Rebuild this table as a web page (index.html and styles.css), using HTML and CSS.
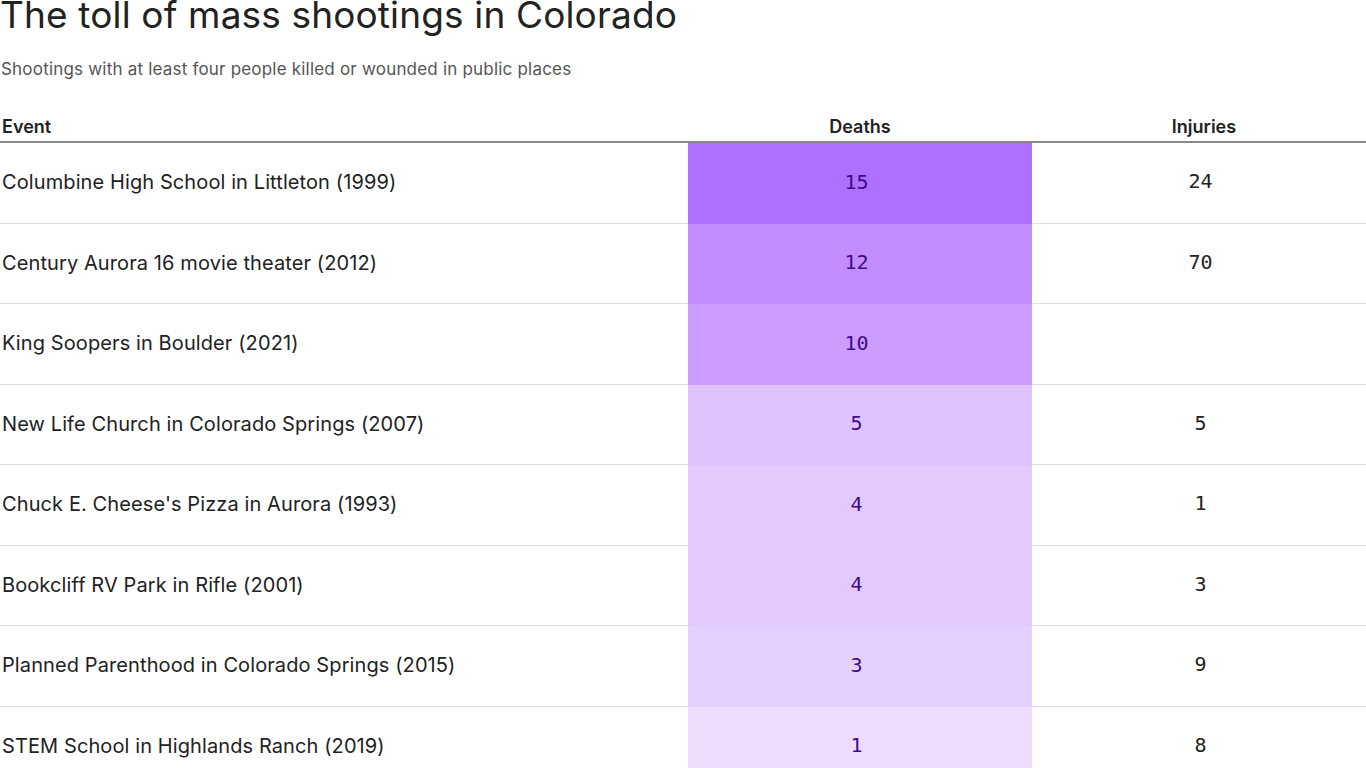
FILE: index.html
```html
<!DOCTYPE html>
<html lang="en">
<head>
<meta charset="utf-8">
<title>The toll of mass shootings in Colorado</title>
<link rel="stylesheet" href="styles.css">
</head>
<body>
<main class="page">
  <h1 class="title">The toll of mass shootings in Colorado</h1>
  <p class="subtitle">Shootings with at least four people killed or wounded in public places</p>
  <div class="table">
    <div class="row head">
      <div class="cell event">Event</div>
      <div class="cell num">Deaths</div>
      <div class="cell num">Injuries</div>
    </div>
    <div class="row">
      <div class="cell event">Columbine High School in Littleton (1999)</div>
      <div class="cell num deaths d15">15</div>
      <div class="cell num inj">24</div>
    </div>
    <div class="row">
      <div class="cell event">Century Aurora 16 movie theater (2012)</div>
      <div class="cell num deaths d12">12</div>
      <div class="cell num inj">70</div>
    </div>
    <div class="row">
      <div class="cell event">King Soopers in Boulder (2021)</div>
      <div class="cell num deaths d10">10</div>
      <div class="cell num inj"></div>
    </div>
    <div class="row">
      <div class="cell event">New Life Church in Colorado Springs (2007)</div>
      <div class="cell num deaths d5">5</div>
      <div class="cell num inj">5</div>
    </div>
    <div class="row">
      <div class="cell event">Chuck E. Cheese's Pizza in Aurora (1993)</div>
      <div class="cell num deaths d4">4</div>
      <div class="cell num inj">1</div>
    </div>
    <div class="row">
      <div class="cell event">Bookcliff RV Park in Rifle (2001)</div>
      <div class="cell num deaths d4">4</div>
      <div class="cell num inj">3</div>
    </div>
    <div class="row">
      <div class="cell event">Planned Parenthood in Colorado Springs (2015)</div>
      <div class="cell num deaths d3">3</div>
      <div class="cell num inj">9</div>
    </div>
    <div class="row">
      <div class="cell event">STEM School in Highlands Ranch (2019)</div>
      <div class="cell num deaths d1">1</div>
      <div class="cell num inj">8</div>
    </div>
  </div>
</main>
</body>
</html>
```

FILE: styles.css
```css
html, body {
  margin: 0;
  padding: 0;
  background: #fff;
  overflow: hidden;
}
body {
  font-family: Inter, "Liberation Sans", Arial, sans-serif;
  color: #222;
}
.page {
  width: 1376px;
}
.title {
  margin: 0;
  font-size: 37px;
  line-height: 30px;
  font-weight: 400;
  color: #222;
  letter-spacing: 0.15px;
}
.subtitle {
  margin: 27px 0 0 1px;
  font-size: 17px;
  line-height: 24px;
  color: #555;
  letter-spacing: 0.2px;
}
.table {
  margin-top: 35px;
}
.row {
  display: grid;
  grid-template-columns: 688px 344px 344px;
  height: 80.5px;
  border-bottom: 1px solid #e0e0e0;
  box-sizing: border-box;
}
.row.head {
  height: auto;
  border-bottom: 2px solid #888;
}
.head .cell {
  font-size: 18px;
  line-height: 22px;
  font-weight: 600;
  padding-bottom: 3px;
  color: #222;
  letter-spacing: 0;
}
.cell {
  display: flex;
  align-items: center;
}
.event {
  padding-left: 2px;
  font-size: 20px;
  letter-spacing: 0.1px;
  padding-bottom: 1px;
}
.num {
  justify-content: center;
}
.inj, .deaths {
  font-family: "DejaVu Sans Mono", "Liberation Mono", monospace;
  font-size: 20px;
  padding-right: 7px;
  padding-bottom: 3px;
}
.inj { color: #222; }
.deaths {
  color: #3e0b8a;
  margin-bottom: -1px;
}
.d15 { background: #b070ff; }
.d12 { background: #c38cff; }
.d10 { background: #cc9dff; }
.d5 { background: #dfc3ff; }
.d4 { background: #e2caff; }
.d3 { background: #e5d1ff; }
.d1 { background: #eeddff; }
```
